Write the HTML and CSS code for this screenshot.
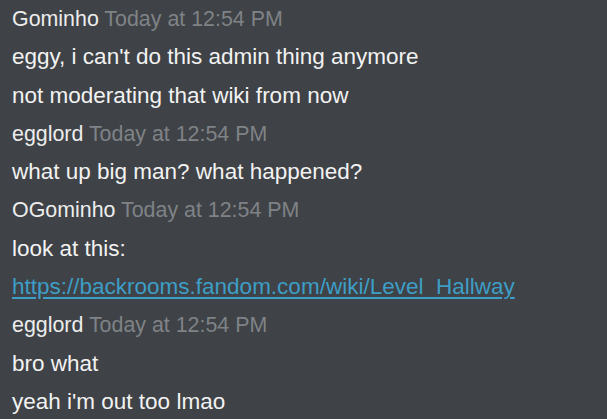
FILE: index.html
```html
<!DOCTYPE html>
<html>
<head>
<meta charset="utf-8">
<link rel="stylesheet" href="styles.css">
</head>
<body>
<div class="chat">
  <div class="line head"><span class="name">Gominho</span> <span class="time">Today at 12:54 PM</span></div>
  <div class="line msg">eggy, i can't do this admin thing anymore</div>
  <div class="line msg">not moderating that wiki from now</div>
  <div class="line head"><span class="name">egglord</span> <span class="time">Today at 12:54 PM</span></div>
  <div class="line msg">what up big man? what happened?</div>
  <div class="line head"><span class="name">OGominho</span> <span class="time">Today at 12:54 PM</span></div>
  <div class="line msg">look at this:</div>
  <div class="line msg"><a class="link" href="#">https://backrooms.fandom.com/wiki/Level_Hallway</a></div>
  <div class="line head"><span class="name">egglord</span> <span class="time">Today at 12:54 PM</span></div>
  <div class="line msg">bro what</div>
  <div class="line msg">yeah i'm out too lmao</div>
</div>
</body>
</html>
```

FILE: styles.css
```css
html, body {
  margin: 0;
  padding: 0;
  background: #3f4246;
  height: 100%;
  overflow: hidden;
}
.chat {
  display: flex;
  flex-direction: column;
  padding: 0 0 0 12px;
  font-family: "Liberation Sans", Arial, sans-serif;
}
.line {
  height: 38.3px;
  line-height: 38.3px;
  white-space: nowrap;
}
.head {
  font-size: 21.4px;
}
.name {
  color: #eceded;
}
.time {
  color: #7f8286;
}
.msg {
  font-size: 22.5px;
  color: #f2f2f2;
}
.link {
  color: #3d9ec7;
  text-decoration: underline;
  text-underline-offset: 3px;
}
```
